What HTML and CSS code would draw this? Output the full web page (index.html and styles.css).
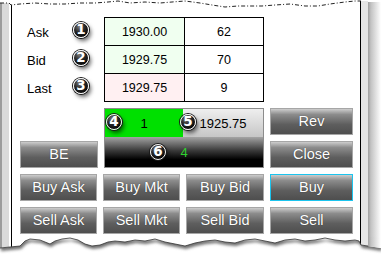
FILE: index.html
```html
<!DOCTYPE html>
<html>
<head>
<meta charset="utf-8">
<link rel="stylesheet" href="styles.css">
</head>
<body>
<div class="shot">
  <svg class="tear tear-top" width="381" height="9" viewBox="0 0 381 9">
    <defs>
      <linearGradient id="rshTop" x1="0" x2="1" y1="0" y2="0">
        <stop offset="0" stop-color="#a2a2a2"/>
        <stop offset="0.25" stop-color="#c4c4c4"/>
        <stop offset="1" stop-color="#ffffff"/>
      </linearGradient>
    </defs>
    <rect x="0" y="3" width="2" height="6" fill="#9c9c9c"/>
    <rect x="2" y="3" width="7" height="6" fill="#dadada"/>
    <rect x="11" y="5" width="1" height="4" fill="#000"/>
    <rect x="360" y="1" width="1" height="8" fill="#000"/>
    <rect x="361" y="1" width="7" height="8" fill="#e6e6e6"/>
    <rect x="368" y="2" width="13" height="7" fill="url(#rshTop)"/>
    <polyline points="0,3 9,3 11,5 20,4 35,3 50,4 65,4 80,3 95,3 108,2 118,1 130,3 145,2 160,3 172,2 185,1 200,3 212,5 225,7 238,6 250,6 262,6 275,5 290,4 305,6 318,6 330,4 345,2 355,1 361,1" fill="none" stroke="#222" stroke-width="1" stroke-dasharray="4 2 1 2"/>
  </svg>
  <div class="mid">
    <div class="lgutter"></div>
    <div class="window">
      <div class="quotes">
        <div class="labels">
          <div class="qrow"><span class="qlabel">Ask</span><span class="badge">1</span></div>
          <div class="qrow"><span class="qlabel">Bid</span><span class="badge">2</span></div>
          <div class="qrow"><span class="qlabel">Last</span><span class="badge">3</span></div>
        </div>
        <div class="qtable">
          <div class="cell c1 up">1930.00</div><div class="cell c2">62</div>
          <div class="cell c1 up">1929.75</div><div class="cell c2">70</div>
          <div class="cell c1 down last">1929.75</div><div class="cell c2 last">9</div>
        </div>
      </div>
      <div class="pos">
        <div class="btn be">BE</div>
        <div class="posbox">
          <div class="pos-top">
            <div class="qty">1</div>
            <div class="avg">1925.75</div>
          </div>
          <div class="pos-bot">4</div>
          <span class="badge b4">4</span>
          <span class="badge b5">5</span>
          <span class="badge b6">6</span>
        </div>
        <div class="side">
          <div class="btn">Rev</div>
          <div class="btn">Close</div>
        </div>
      </div>
      <div class="orders">
        <div class="btn">Buy Ask</div>
        <div class="btn">Buy Mkt</div>
        <div class="btn">Buy Bid</div>
        <div class="btn focus">Buy</div>
        <div class="btn">Sell Ask</div>
        <div class="btn">Sell Mkt</div>
        <div class="btn">Sell Bid</div>
        <div class="btn">Sell</div>
      </div>
    </div>
    <div class="rgutter"></div>
  </div>
  <svg class="tear tear-bottom" width="381" height="20" viewBox="0 0 381 20">
    <defs>
      <clipPath id="cb">
        <polygon points="0,11 10,10 20,9 25,4 30,2 40,3 45,5 50,7 55,4 62,2 70,1 78,3 85,7 92,9 100,8 108,5 115,4 125,5 135,3 145,4 155,2 165,5 175,7 185,9 195,6 205,4 215,3 225,5 235,6 245,3 255,2 265,4 275,6 285,3 295,2 305,4 315,3 325,1 335,3 345,4 355,3 359,4 361,8 368,9 374,10 381,11 381,0 0,0"/>
      </clipPath>
      <filter id="blur" x="-10%" y="-50%" width="120%" height="200%">
        <feGaussianBlur stdDeviation="1.6"/>
      </filter>
      <linearGradient id="rshBot" x1="0" x2="1" y1="0" y2="0">
        <stop offset="0" stop-color="#a2a2a2"/>
        <stop offset="0.25" stop-color="#c4c4c4"/>
        <stop offset="1" stop-color="#ffffff"/>
      </linearGradient>
    </defs>
    <polygon transform="translate(1,3)" filter="url(#blur)" fill="#6e6e6e" points="0,11 10,10 20,9 25,4 30,2 40,3 45,5 50,7 55,4 62,2 70,1 78,3 85,7 92,9 100,8 108,5 115,4 125,5 135,3 145,4 155,2 165,5 175,7 185,9 195,6 205,4 215,3 225,5 235,6 245,3 255,2 265,4 275,6 285,3 295,2 305,4 315,3 325,1 335,3 345,4 355,3 359,4 361,8 368,9 374,10 381,11 381,0 0,0"/>
    <g clip-path="url(#cb)">
      <rect x="0" y="0" width="381" height="20" fill="#fff"/>
      <rect x="0" y="0" width="2" height="20" fill="#9c9c9c"/>
      <rect x="2" y="0" width="7" height="20" fill="#dadada"/>
      <rect x="11" y="0" width="1" height="20" fill="#000"/>
      <rect x="360" y="0" width="1" height="20" fill="#000"/>
      <rect x="361" y="0" width="7" height="20" fill="#e6e6e6"/>
      <rect x="368" y="0" width="13" height="20" fill="url(#rshBot)"/>
    </g>
    <polyline points="0,11 10,10 20,9 25,4 30,2 40,3 45,5 50,7 55,4 62,2 70,1 78,3 85,7 92,9 100,8 108,5 115,4 125,5 135,3 145,4 155,2 165,5 175,7 185,9 195,6 205,4 215,3 225,5 235,6 245,3 255,2 265,4 275,6 285,3 295,2 305,4 315,3 325,1 335,3 345,4 355,3 359,4 361,8 368,9" fill="none" stroke="#333" stroke-width="0.8"/>
  </svg>
</div>
</body>
</html>
```
FILE: styles.css
```css
* { box-sizing: border-box; }
html, body { margin: 0; padding: 0; }
body {
  width: 381px;
  height: 257px;
  overflow: hidden;
  background: #fff;
  font-family: "Liberation Sans", Arial, sans-serif;
  color: #000;
}
.shot {
  display: flex;
  flex-direction: column;
  width: 381px;
  height: 257px;
}
.tear { display: block; flex: none; }
.mid {
  display: flex;
  height: 228px;
  flex: none;
}
.lgutter {
  width: 11px;
  background: linear-gradient(to right, #9c9c9c 0 2px, #dadada 2px 9px, #fff 9px);
}
.window {
  width: 350px;
  border-left: 1px solid #000;
  border-right: 1px solid #000;
  padding: 8px 0 0 8px;
}
.rgutter {
  width: 20px;
  background: linear-gradient(to right, #e6e6e6 0 7px, #a2a2a2 7px, #c4c4c4 10px, #fff 20px);
}

/* quotes */
.quotes { display: flex; }
.labels { width: 84px; padding-top: 1px; }
.qrow {
  height: 28px;
  display: flex;
  align-items: center;
}
.qlabel {
  width: 53px;
  padding-left: 7px;
  font-size: 13px;
}
.badge {
  display: block;
  width: 16px;
  height: 16px;
  border-radius: 50%;
  border: 1.5px solid #f4f4f4;
  box-shadow: 0 0 0 1px #1a1a1a, 2px 3px 4px rgba(0, 0, 0, 0.6);
  background: radial-gradient(circle at 38% 28%, #7a7a7a 0, #262626 42%, #000 85%);
  color: #fff;
  font: bold 13.5px/13px "DejaVu Sans", "Liberation Sans", Arial, sans-serif;
  text-align: center;
}
.qrow .badge { margin-bottom: 4px; }
.qtable {
  width: 160px;
  border: 1px solid #000;
  display: grid;
  grid-template-columns: 80px 78px;
  grid-template-rows: 28px 28px 27px;
}
.cell {
  display: flex;
  align-items: center;
  justify-content: center;
  font-size: 12.5px;
  border-bottom: 1px solid #000;
}
.cell.last { border-bottom: none; }
.c1 { border-right: 1px solid #000; }
.up { background: #f0fff0; }
.down { background: #fff0f2; }

/* position */
.pos {
  display: grid;
  grid-template-columns: 78px 160px 83px;
  column-gap: 6px;
  margin-top: 6px;
  height: 60px;
}
.be { align-self: end; height: 27px; }
.posbox {
  position: relative;
  border: 1px solid #8c8c8c;
  display: flex;
  flex-direction: column;
}
.pos-top { display: flex; height: 28px; }
.qty {
  width: 78px;
  background: #00e000;
  display: flex;
  align-items: center;
  justify-content: center;
  font-size: 13px;
}
.avg {
  flex: 1;
  background: linear-gradient(#efefef, #c6c6c6);
  display: flex;
  align-items: center;
  justify-content: center;
  font-size: 13px;
}
.pos-bot {
  flex: 1;
  background: linear-gradient(#a4a4a4 0%, #3a3a3a 45%, #000 75%);
  color: #2ed12e;
  display: flex;
  align-items: center;
  justify-content: center;
  font-size: 13px;
}
.posbox .badge { position: absolute; }
.b4 { left: 1px; top: 5px; }
.b5 { left: 75px; top: 5px; }
.b6 { left: 45px; top: 35px; }
.side {
  display: flex;
  flex-direction: column;
  gap: 6px;
}
.side .btn { height: 27px; }

/* orders */
.orders {
  display: grid;
  grid-template-columns: 77px 77px 78px 83px;
  grid-auto-rows: 27px;
  column-gap: 6px;
  row-gap: 6px;
  margin-top: 6px;
}
.btn {
  display: flex;
  align-items: center;
  justify-content: center;
  border: 1px solid #a6a6a6;
  background: linear-gradient(#cdcdcd 0%, #8c8c8c 22%, #5e5e5e 62%, #4e4e4e 100%);
  color: #fff;
  font-size: 14.5px;
  text-shadow: 0 0 1px rgba(0, 0, 0, 0.6);
  padding-bottom: 1px;
}
.btn.focus { border-color: #1cc4ee; }
```
